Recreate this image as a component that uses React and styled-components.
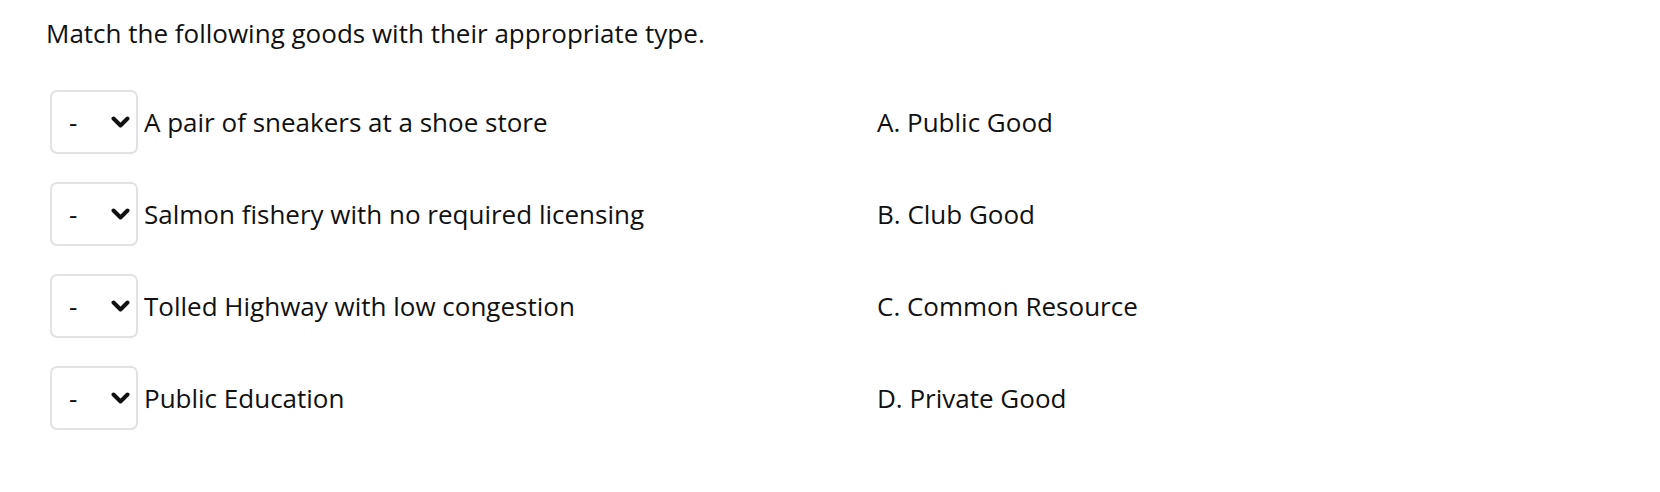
import React from "react";
import styled, { createGlobalStyle } from "styled-components";

const GlobalStyle = createGlobalStyle`
  body {
    margin: 0;
    background: #ffffff;
    font-family: "Open Sans", "Liberation Sans", sans-serif;
    color: #111111;
  }
`;

const Page = styled.div`
  padding: 15px 46px 0 46px;
`;

const Question = styled.div`
  font-size: 26px;
  line-height: 36px;
  margin-bottom: 39px;
`;

const Grid = styled.div`
  display: grid;
  grid-template-columns: 831px 1fr;
  row-gap: 28px;
`;

const Left = styled.div`
  display: flex;
  align-items: center;
  gap: 6px;
  padding-left: 4px;
`;

const Right = styled.div`
  display: flex;
  align-items: center;
  font-size: 26px;
`;

const SelectBox = styled.div`
  width: 88px;
  height: 64px;
  box-sizing: border-box;
  border: 2px solid #e2e2e2;
  border-radius: 7px;
  display: flex;
  align-items: center;
  justify-content: space-between;
  padding: 0 6px 0 17px;
  font-size: 26px;
`;

const Label = styled.span`
  font-size: 26px;
`;

const Chevron = () => (
  <svg width="19" height="13" viewBox="0 0 19 13">
    <path d="M2.5 2.5 L9.5 9.5 L16.5 2.5" fill="none" stroke="#111" strokeWidth="4" strokeLinecap="round" strokeLinejoin="round" />
  </svg>
);

const items = [
  ["A pair of sneakers at a shoe store", "A. Public Good"],
  ["Salmon fishery with no required licensing", "B. Club Good"],
  ["Tolled Highway with low congestion", "C. Common Resource"],
  ["Public Education", "D. Private Good"],
];

export default function App() {
  return (
    <Page>
      <GlobalStyle />
      <Question>Match the following goods with their appropriate type.</Question>
      <Grid>
        {items.map(([l, r]) => (
          <React.Fragment key={l}>
            <Left>
              <SelectBox>
                <span>-</span>
                <Chevron />
              </SelectBox>
              <Label>{l}</Label>
            </Left>
            <Right>{r}</Right>
          </React.Fragment>
        ))}
      </Grid>
    </Page>
  );
}
